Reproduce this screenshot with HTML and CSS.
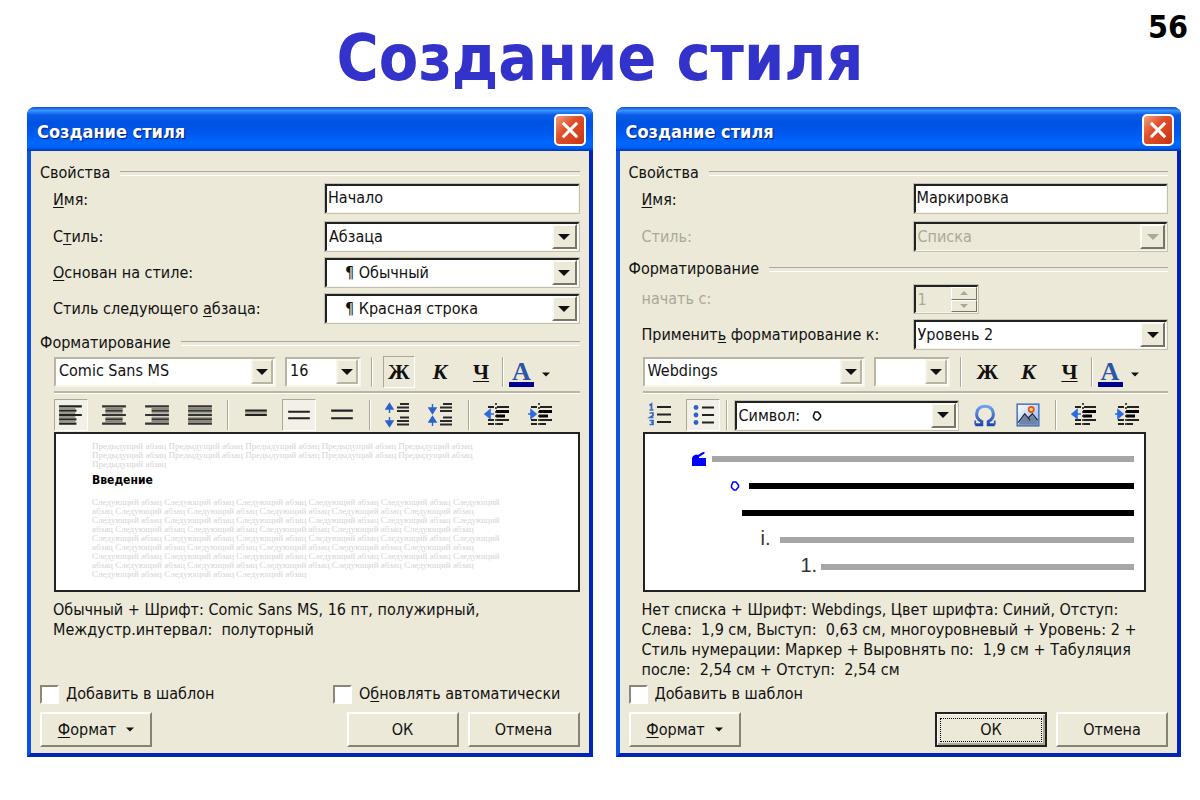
FILE: index.html
```html
<!DOCTYPE html>
<html lang="ru">
<head>
<meta charset="utf-8">
<title>Создание стиля</title>
<link rel="stylesheet" href="styles.css">
</head>
<body>
<svg class="defs" aria-hidden="true">
  <defs>
    <linearGradient id="ink" x1="0" y1="0" x2="0" y2="1"><stop offset="0" stop-color="#6fa0f0"/><stop offset="1" stop-color="#1c48b4"/></linearGradient>
    <linearGradient id="sky" x1="0" y1="0" x2="1" y2="1"><stop offset="0" stop-color="#fff"/><stop offset="1" stop-color="#8fb4f0"/></linearGradient>
  </defs>
  <symbol id="close" viewBox="0 0 32 32"><path d="M9 9 L23 23 M23 9 L9 23" stroke="#fff" stroke-width="3.4" stroke-linecap="square"/></symbol>
  <symbol id="down" viewBox="0 0 12 6"><path d="M0 0 H12 L6 6 Z" fill="currentColor"/></symbol>
  <symbol id="up" viewBox="0 0 12 6"><path d="M0 6 H12 L6 0 Z" fill="currentColor"/></symbol>
  <symbol id="left" viewBox="0 0 24 24"><path d="M1 4h21M1 8h16M1 12h21M1 16h16M1 20h16" stroke="#222" stroke-width="2"/><path d="M1 6h15M1 10h15M1 14h15M1 18h15" stroke="#999686" stroke-width="2"/></symbol>
  <symbol id="center" viewBox="0 0 24 24"><path d="M1 4h22M4 8h16M1 12h22M4 16h16M1 20h22" stroke="#333" stroke-width="2"/><path d="M4 6h16M4 10h16M4 14h16M4 18h16" stroke="#888577" stroke-width="1"/></symbol>
  <symbol id="right" viewBox="0 0 24 24"><path d="M1 4h22M7 8h16M1 12h22M7 16h16M1 20h22" stroke="#333" stroke-width="2"/><path d="M7 6h16M7 10h16M7 14h16M7 18h16" stroke="#888577" stroke-width="1"/></symbol>
  <symbol id="justify" viewBox="0 0 24 24"><path d="M1 4h22M1 8h22M1 12h22M1 16h22M1 20h22" stroke="#333" stroke-width="2"/><path d="M1 6h22M1 10h22M1 14h22M1 18h22" stroke="#888577" stroke-width="1"/></symbol>
  <symbol id="sp1" viewBox="0 0 24 24"><path d="M2 8h20M2 12h20" stroke="#222" stroke-width="2"/><path d="M2 10h20" stroke="#aaa797" stroke-width="2"/></symbol>
  <symbol id="sp15" viewBox="0 0 24 24"><path d="M2 9h20M2 15h20" stroke="#222" stroke-width="2"/></symbol>
  <symbol id="sp2" viewBox="0 0 24 24"><path d="M2 8h20M2 15h20" stroke="#222" stroke-width="2"/></symbol>
  <symbol id="parOut" viewBox="0 0 26 26"><path d="M4.500 11V4M1 7 L4.500 1.500 L8 7ZM4.500 15V22M1 19 L4.500 24.500 L8 19Z" fill="#2b62cc" stroke="#2b62cc" stroke-width="1.400"/><path d="M15 2h9M12 5.500h12M12 9h12M15 15.500h9M12 19h12M12 22.500h12" stroke="#2a2a2a" stroke-width="1.800"/></symbol>
  <symbol id="parIn" viewBox="0 0 26 26"><path d="M4.500 2V8M1 6 L4.500 11.500 L8 6ZM4.500 24V18M1 20 L4.500 14.500 L8 20Z" fill="#2b62cc" stroke="#2b62cc" stroke-width="1.400"/><path d="M15 2h9M12 5.500h12M12 9h12M15 15.500h9M12 19h12M12 22.500h12" stroke="#2a2a2a" stroke-width="1.800"/></symbol>
  <symbol id="outdent" viewBox="0 0 26 26"><path d="M4 5h6M13 5h12M4 18h6M13 18h12M4 22h6M13 22h6" stroke="#222" stroke-width="1.900"/><path d="M12 9.500h13M12 14h9" stroke="#000" stroke-width="3"/><path d="M12 1v24" stroke="#222" stroke-width="1.600" stroke-dasharray="2 2"/><path d="M1 12 L6 8V16Z M5 12h5" fill="#2b6ae0" stroke="#2b6ae0" stroke-width="1.600"/></symbol>
  <symbol id="indent" viewBox="0 0 26 26"><path d="M4 5h6M13 5h12M4 18h6M13 18h12M4 22h6M13 22h6" stroke="#222" stroke-width="1.900"/><path d="M12 9.500h13M12 14h9" stroke="#000" stroke-width="3"/><path d="M12 1v24" stroke="#222" stroke-width="1.600" stroke-dasharray="2 2"/><path d="M9 12 L4 8V16Z M1 12h5" fill="#2b6ae0" stroke="#2b6ae0" stroke-width="1.600"/></symbol>
  <symbol id="numbers" viewBox="0 0 26 26"><path d="M10 5h14M10 12.500h14M10 20h14" stroke="#222" stroke-width="2"/><path d="M2.500 3.500 L4.500 2V8M2.500 8h4M2.500 11h3.500v2.500l-3 2h3.500M2.500 18.500h3.500v4h-3.500M4 20.500h2" stroke="#3567c8" stroke-width="1.700" fill="none"/></symbol>
  <symbol id="bullets" viewBox="0 0 26 26"><path d="M12 5.500h12M12 13h12M12 20.500h12" stroke="#222" stroke-width="2"/><g fill="#2f62c8"><circle cx="6" cy="5.500" r="2.400"/><circle cx="6" cy="13" r="2.400"/><circle cx="6" cy="20.500" r="2.400"/></g></symbol>
  <symbol id="omega" viewBox="0 0 24 24"><path d="M3 21H9V18C1 14 4 4 12 4S23 14 15 18V21H21" fill="none" stroke="url(#ink)" stroke-width="2.800"/><path d="M3 17v4M21 17v4" stroke="#2a58c4" stroke-width="1.600"/></symbol>
  <symbol id="picture" viewBox="0 0 24 24"><rect x="2" y="2" width="20" height="20" fill="url(#sky)" stroke="#4a73b8" stroke-width="1.400"/><circle cx="15" cy="7" r="2.400" fill="#ffd27a" stroke="#e8560e" stroke-width="1.600"/><path d="M3 21 L9 12 L12.500 16 L16 12.500 L21 18V21Z" fill="#6f83a6"/><path d="M3 19 L9 11 L14 17 M12 15 L16 11 L21 17" fill="none" stroke="#222d40" stroke-width="1.300"/></symbol>
  <symbol id="clap" viewBox="0 0 14 14"><path d="M0 6H14V14H0ZM0 6 L1 4 L4 2.500 L6 3 L11 0H12.500V1.500L7 5V6Z" fill="#00f"/></symbol>
  <symbol id="ring" viewBox="0 0 10 10"><path d="M3 1H6L8.500 4V6L6 9H4L1.500 6.500V4.500Z" fill="none" stroke="currentColor" stroke-width="1.500"/></symbol>
</svg>

<header class="slide-head">
  <h1 class="slide-title">Создание стиля</h1>
  <span class="slide-number">56</span>
</header>

<main class="dialogs">
  <section class="dialog">
    <div class="titlebar"><h2>Создание стиля</h2><button class="close" aria-label="Закрыть"><svg><use href="#close"/></svg></button></div>
    <form class="body">
      <h3 class="legend">Свойства</h3>
      <div class="fields">
        <label for="n1"><u>И</u>мя:</label><input class="sunken name" id="n1" type="text" value="Начало">
        <label for="s1">С<u>т</u>иль:</label><span class="combo"><select class="sunken" id="s1"><option>Абзаца</option></select><i class="arrow"><svg><use href="#down"/></svg></i></span>
        <label for="b1"><u>О</u>снован на стиле:</label><span class="combo marked"><select class="sunken" id="b1"><option>¶ Обычный</option></select><i class="arrow"><svg><use href="#down"/></svg></i></span>
        <label for="x1">Стиль следующего <u>а</u>бзаца:</label><span class="combo marked"><select class="sunken" id="x1"><option>¶ Красная строка</option></select><i class="arrow"><svg><use href="#down"/></svg></i></span>
      </div>
      <h3 class="legend">Форматирование</h3>
      <div class="toolbar ruled">
        <span class="combo flat font"><select aria-label="Шрифт"><option>Comic Sans MS</option></select><i class="arrow"><svg><use href="#down"/></svg></i></span>
        <span class="combo flat size"><select aria-label="Размер"><option>16</option></select><i class="arrow"><svg><use href="#down"/></svg></i></span>
        <span class="sep"></span>
        <button type="button" class="tool pressed letter">Ж</button><button type="button" class="tool letter"><em>К</em></button><button type="button" class="tool letter"><u>Ч</u></button>
        <span class="sep near"></span>
        <button type="button" class="color"><span>A</span><svg><use href="#down"/></svg></button>
      </div>
      <div class="toolbar">
        <button type="button" class="tool pressed" aria-label="По левому краю"><svg><use href="#left"/></svg></button>
        <button type="button" class="tool" aria-label="По центру"><svg><use href="#center"/></svg></button>
        <button type="button" class="tool" aria-label="По правому краю"><svg><use href="#right"/></svg></button>
        <button type="button" class="tool" aria-label="По ширине"><svg><use href="#justify"/></svg></button>
        <span class="sep"></span>
        <button type="button" class="tool" aria-label="Одинарный"><svg><use href="#sp1"/></svg></button>
        <button type="button" class="tool pressed" aria-label="Полуторный"><svg><use href="#sp15"/></svg></button>
        <button type="button" class="tool" aria-label="Двойной"><svg><use href="#sp2"/></svg></button>
        <span class="sep"></span>
        <button type="button" class="tool" aria-label="Увеличить интервал"><svg><use href="#parOut"/></svg></button>
        <button type="button" class="tool" aria-label="Уменьшить интервал"><svg><use href="#parIn"/></svg></button>
        <span class="sep"></span>
        <button type="button" class="tool" aria-label="Уменьшить отступ"><svg><use href="#outdent"/></svg></button>
        <button type="button" class="tool" aria-label="Увеличить отступ"><svg><use href="#indent"/></svg></button>
      </div>
      <div class="preview text">
        <p>Предыдущий абзац Предыдущий абзац Предыдущий абзац Предыдущий абзац Предыдущий абзац<br>Предыдущий абзац Предыдущий абзац Предыдущий абзац Предыдущий абзац Предыдущий абзац<br>Предыдущий абзац</p>
        <p class="sample">Введение</p>
        <p>Следующий абзац Следующий абзац Следующий абзац Следующий абзац Следующий абзац Следующий<br>абзац Следующий абзац Следующий абзац Следующий абзац Следующий абзац Следующий абзац<br>Следующий абзац Следующий абзац Следующий абзац Следующий абзац Следующий абзац Следующий<br>абзац Следующий абзац Следующий абзац Следующий абзац Следующий абзац Следующий абзац<br>Следующий абзац Следующий абзац Следующий абзац Следующий абзац Следующий абзац Следующий<br>абзац Следующий абзац Следующий абзац Следующий абзац Следующий абзац Следующий абзац<br>Следующий абзац Следующий абзац Следующий абзац Следующий абзац Следующий абзац Следующий<br>абзац Следующий абзац Следующий абзац Следующий абзац Следующий абзац Следующий абзац<br>Следующий абзац Следующий абзац Следующий абзац</p>
      </div>
      <p class="summary">Обычный + Шрифт: Comic Sans MS, 16 пт, полужирный,<br>Междустр.интервал:&nbsp; полуторный</p>
      <div class="checks">
        <label><input type="checkbox"><span><u>Д</u>обавить в шаблон</span></label>
        <label><input type="checkbox"><span>О<u>б</u>новлять автоматически</span></label>
      </div>
      <div class="actions">
        <button type="button" class="push format"><span><u>Ф</u>ормат</span><svg><use href="#down"/></svg></button>
        <button type="button" class="push">ОК</button>
        <button type="button" class="push">Отмена</button>
      </div>
    </form>
  </section>

  <section class="dialog">
    <div class="titlebar"><h2>Создание стиля</h2><button class="close" aria-label="Закрыть"><svg><use href="#close"/></svg></button></div>
    <form class="body">
      <h3 class="legend">Свойства</h3>
      <div class="fields">
        <label for="n2"><u>И</u>мя:</label><input class="sunken name" id="n2" type="text" value="Маркировка">
        <label for="s2" class="off">Стиль:</label><span class="combo"><select class="sunken" id="s2" disabled><option>Списка</option></select><i class="arrow off"><svg><use href="#down"/></svg></i></span>
      </div>
      <h3 class="legend short">Форматирование</h3>
      <div class="fields">
        <label for="t2" class="off">начать с:</label><span class="spin"><input class="sunken" id="t2" type="text" value="1" disabled><i class="steps off"><b><svg><use href="#up"/></svg></b><b><svg><use href="#down"/></svg></b></i></span>
        <label for="a2">Применит<u>ь</u> форматирование к:</label><span class="combo"><select class="sunken" id="a2"><option>Уровень 2</option></select><i class="arrow"><svg><use href="#down"/></svg></i></span>
      </div>
      <div class="toolbar ruled">
        <span class="combo flat font"><select aria-label="Шрифт"><option>Webdings</option></select><i class="arrow"><svg><use href="#down"/></svg></i></span>
        <span class="combo flat size"><select aria-label="Размер"><option></option></select><i class="arrow"><svg><use href="#down"/></svg></i></span>
        <span class="sep"></span>
        <button type="button" class="tool letter">Ж</button><button type="button" class="tool letter"><em>К</em></button><button type="button" class="tool letter"><u>Ч</u></button>
        <span class="sep near"></span>
        <button type="button" class="color"><span>A</span><svg><use href="#down"/></svg></button>
      </div>
      <div class="toolbar">
        <button type="button" class="tool" aria-label="Нумерация"><svg><use href="#numbers"/></svg></button>
        <button type="button" class="tool pressed" aria-label="Маркеры"><svg><use href="#bullets"/></svg></button>
        <span class="sep tight"></span>
        <span class="combo symbol"><select class="sunken" aria-label="Символ"><option>Символ:</option></select><svg class="glyph"><use href="#ring"/></svg><i class="arrow"><svg><use href="#down"/></svg></i></span>
        <button type="button" class="tool" aria-label="Вставить символ"><svg><use href="#omega"/></svg></button>
        <button type="button" class="tool" aria-label="Вставить рисунок"><svg><use href="#picture"/></svg></button>
        <span class="sep"></span>
        <button type="button" class="tool" aria-label="Уменьшить отступ"><svg><use href="#outdent"/></svg></button>
        <button type="button" class="tool" aria-label="Увеличить отступ"><svg><use href="#indent"/></svg></button>
      </div>
      <div class="preview levels">
        <div class="level one"><svg class="clap"><use href="#clap"/></svg></div>
        <div class="level two"><svg class="ring"><use href="#ring"/></svg></div>
        <div class="level three"></div>
        <div class="level four"><span>i.</span></div>
        <div class="level five"><span>1.</span></div>
      </div>
      <p class="summary">Нет списка + Шрифт: Webdings, Цвет шрифта: Синий, Отступ:<br>Слева:&nbsp; 1,9 см, Выступ:&nbsp; 0,63 см, многоуровневый + Уровень: 2 +<br>Стиль нумерации: Маркер + Выровнять по:&nbsp; 1,9 см + Табуляция<br>после:&nbsp; 2,54 см + Отступ:&nbsp; 2,54 см</p>
      <div class="checks">
        <label><input type="checkbox"><span><u>Д</u>обавить в шаблон</span></label>
      </div>
      <div class="actions">
        <button type="button" class="push format"><span><u>Ф</u>ормат</span><svg><use href="#down"/></svg></button>
        <button type="button" class="push default"><span>ОК</span></button>
        <button type="button" class="push">Отмена</button>
      </div>
    </form>
  </section>
</main>
</body>
</html>
```
FILE: styles.css
```css
* { box-sizing: border-box; }
body {
  margin: 0;
  background: #fff;
  color: #111;
  font: 16px/20px "DejaVu Sans Condensed", "DejaVu Sans", sans-serif;
}
h1, h2, h3, p { margin: 0; }
input, select, button { font: inherit; color: inherit; margin: 0; border-radius: 0; }
svg { display: block; }
u { text-underline-offset: 2px; text-decoration-thickness: 1px; }
.defs { position: absolute; width: 0; height: 0; }

.slide-head {
  display: grid;
  grid-template-columns: 1fr auto 1fr;
  height: 107px;
  padding: 8px 12px 0;
}
.slide-title {
  grid-column: 2;
  padding-top: 12px;
  color: #3333cc;
  font-size: 64px;
  line-height: 76px;
  font-weight: bold;
}
.slide-number {
  justify-self: end;
  color: #000;
  font-size: 32px;
  line-height: 38px;
  font-weight: bold;
}

.dialogs {
  display: grid;
  grid-template-columns: repeat(2, minmax(0, 1fr));
  gap: 23px;
  padding: 0 19px 0 27px;
}
.dialog {
  border: solid;
  border-width: 0 4px 4px;
  border-color: #0023b8 #0023b8 #0023b8 #0a53e4;
  border-radius: 8px 8px 0 0;
  background: #ece9d8;
}
.titlebar {
  display: flex;
  align-items: center;
  justify-content: space-between;
  height: 44px;
  margin: 0 -4px;
  padding: 2px 7px 0 10px;
  border-radius: 8px 8px 0 0;
  background: linear-gradient(#0a50cc, #3c94ff 8%, #0a5ce8 18%, #0052e0 35%, #0058ee 60%, #0068ff 82%, #0060f4 92%, #0038b4);
}
.titlebar h2 {
  padding-top: 3px;
  color: #fff;
  font-size: 18px;
  line-height: 24px;
  text-shadow: 1px 1px 1px #001c80;
}
.close {
  width: 32px;
  height: 32px;
  padding: 0;
  border: 2px solid #fff;
  border-radius: 5px;
  background: linear-gradient(135deg, #f0a080, #e0502c 40%, #c83410);
}
.close svg { width: 28px; height: 28px; }

.body { padding: 12px 9px 6px; }
.legend {
  display: flex;
  align-items: center;
  gap: 10px;
  font-size: 16px;
  line-height: 20px;
  font-weight: normal;
}
.legend::after {
  content: "";
  flex: 1;
  height: 3px;
  border-top: 1px solid #aca899;
  border-bottom: 1px solid #fff;
}
.fields {
  display: grid;
  grid-template-columns: 271px minmax(0, 1fr);
  row-gap: 5px;
  align-items: center;
  padding-left: 13px;
}
.fields + .legend { margin: 9px 0 2px; }
.fields + .legend.short { margin: 7px 0 5px; }
.fields + .toolbar { margin-top: 5px; }
.fields .off, .off { color: #aca899; }
.sunken {
  display: block;
  width: 100%;
  height: 31px;
  padding: 0 2px;
  border: 2px solid;
  border-color: #222 #f7f5ec #f7f5ec #222;
  outline: 1px solid #c4c1b0;
  outline-offset: -1px;
  border-width: 3px 2px 2px 3px;
  background: #fff;
  appearance: none;
}
.name { margin-bottom: 2px; padding: 0 0 3px 1px; }
.sunken:disabled { background: #ece9d8; color: #aca899; opacity: 1; }
.combo { position: relative; display: block; }
.marked select { padding-left: 18px; }
.arrow {
  position: absolute;
  top: 3px;
  right: 3px;
  bottom: 3px;
  display: grid;
  place-items: center;
  width: 25px;
  border: 2px solid;
  border-color: #fbfaf4 #77746a #77746a #fbfaf4;
  background: #ece9d8;
  pointer-events: none;
}
.arrow svg { width: 12px; height: 6px; }
.spin { position: relative; width: 66px; }
.spin .sunken { height: 30px; }
.steps { position: absolute; top: 3px; right: 2px; bottom: 2px; width: 26px; display: grid; }
.steps b {
  display: grid;
  place-items: center;
  border: 1px solid;
  border-color: #fff #77746a #77746a #fff;
}
.steps svg { width: 8px; height: 4px; }

.toolbar {
  display: flex;
  align-items: center;
  gap: 9px;
  height: 34px;
  margin: 5px 0 0 14px;
}
.ruled {
  height: 38px;
  margin: 0 0 0 14px;
  padding-bottom: 2px;
  border-bottom: 2px solid #b8b5a4;
  box-shadow: 0 1px #fff;
}
.flat select {
  display: block;
  width: 100%;
  height: 30px;
  padding: 0 3px 3px;
  border: 2px solid;
  border-color: #b8b5a4 #f7f5ec #f7f5ec #b8b5a4;
  background: #fff;
  appearance: none;
}
.flat .arrow { width: 22px; top: 2px; border-color: #f7f5ec #b8b5a4 #b8b5a4 #f7f5ec; }
.font { width: 222px; }
.size { width: 76px; }
.symbol { width: 225px; }
.glyph { position: absolute; left: 78px; top: 11px; width: 10px; height: 10px; }
.sep {
  width: 2px;
  height: 30px;
  margin: 0 1px;
  border-left: 1px solid #aca899;
  border-right: 1px solid #fff;
}
.tight { margin: 0 -3px; }
.near { margin: 0 -4px; }
.tool {
  display: grid;
  place-items: center;
  width: 34px;
  height: 32px;
  padding: 0;
  border: 1px solid transparent;
  background: none;
}
.tool svg { width: 26px; height: 26px; }
.pressed {
  border-color: #aca899 #fff #fff #aca899;
  background: #f3f1e7;
}
.letter { width: 32px; font: bold 22px/26px "Liberation Serif", serif; }
.letter.pressed { background: #ece9d8; }
.color {
  display: flex;
  align-items: center;
  gap: 8px;
  padding: 4px 0 0;
  border: 0;
  background: none;
}
.color span {
  width: 25px;
  border-bottom: 5px solid #000090;
  color: #2a55a8;
  font: bold 26px/20px "Liberation Serif", serif;
}
.color svg { width: 8px; height: 5px; }

.preview {
  height: 160px;
  margin: 0 0 0 14px;
  border: 2px solid #222;
  background: #fff;
  overflow: hidden;
}
.text {
  padding: 8px 36px;
  color: #d4d4d4;
  font: 9px/9px "Liberation Serif", serif;
  white-space: nowrap;
}
.sample {
  padding: 4px 0 11px;
  color: #000;
  font: bold 12px/14px "DejaVu Sans Condensed", sans-serif;
}
.levels { margin-right: 22px; padding: 11px 10px 0 0; }
.level { display: flex; align-items: center; height: 27px; color: #333; font: 20px/24px "Liberation Sans", sans-serif; }
.level::after { content: ""; flex: 1; height: 6px; background: #a6a6a6; }
.two::after, .three::after { background: #000; }
.one { padding-left: 47px; gap: 6px; }
.two { padding-left: 85px; gap: 9px; color: #00f; }
.three { padding-left: 97px; }
.four { padding-left: 116px; gap: 9px; }
.five { padding-left: 156px; gap: 4px; }
.level span { padding-bottom: 4px; }
.clap { width: 14px; height: 14px; }
.ring { width: 10px; height: 10px; }

.summary { min-height: 80px; margin: 8px 0 4px 13px; white-space: nowrap; }
.checks { display: grid; grid-template-columns: 293px 1fr; height: 20px; }
.checks label { display: flex; align-items: center; gap: 7px; white-space: nowrap; }
.checks input {
  width: 19px;
  height: 19px;
  border: 2px solid;
  border-color: #8a877a #fff #fff #8a877a;
  background: #fff;
  appearance: none;
}
.actions { display: flex; gap: 9px; margin-top: 8px; }
.push {
  display: flex;
  align-items: center;
  justify-content: center;
  gap: 10px;
  width: 112px;
  height: 35px;
  padding: 0;
  border: 2px solid;
  border-color: #fff #858276 #858276 #fff;
  background: #ece9d8;
}
.push svg { width: 8px; height: 5px; }
.format { margin-right: auto; }
.default { padding: 3px; border-color: #222; box-shadow: inset 1px 1px #fff, inset -2px -2px #aca899; }
.default span { flex: 1; border: 1px dotted #000; line-height: 22px; }
```
